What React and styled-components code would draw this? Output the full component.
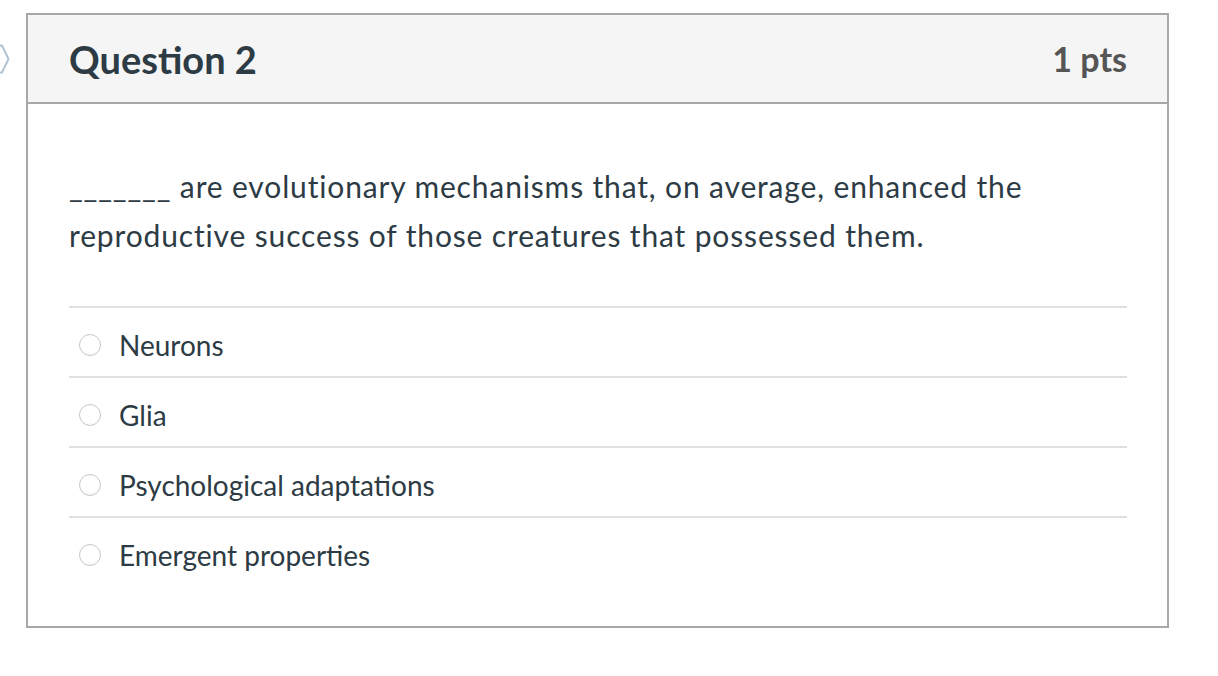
import React from 'react';
import styled, { createGlobalStyle } from 'styled-components';

const GlobalStyle = createGlobalStyle`
  html, body {
    margin: 0;
    padding: 0;
    background: #fff;
    font-family: Lato, "Open Sans", sans-serif;
    color: #2d3b45;
  }
`;

const Page = styled.div`
  display: flex;
  align-items: flex-start;
  padding-top: 13px;
  width: 1218px;
  height: 676px;
  box-sizing: border-box;
`;

const FlagColumn = styled.div`
  width: 26px;
  flex-shrink: 0;
  padding-top: 31px;
`;

const Card = styled.div`
  width: 1143px;
  border: 2px solid #a8a8a8;
  box-sizing: border-box;
  background: #fff;
`;

const Header = styled.div`
  display: flex;
  justify-content: space-between;
  align-items: center;
  height: 89px;
  padding: 0 40px 0 41px;
  background: #f5f5f5;
  border-bottom: 2px solid #a8a8a8;
  box-sizing: border-box;
`;

const Title = styled.h2`
  margin: 0;
  font-size: 38px;
  font-weight: 700;
  color: #2d3b45;
`;

const Points = styled.div`
  font-size: 34px;
  font-weight: 700;
  color: #555;
`;

const Body = styled.div`
  padding: 58px 40px 40px 41px;
`;

const QuestionText = styled.p`
  margin: 0 0 46px;
  font-size: 30px;
  line-height: 49px;
  letter-spacing: 0.85px;
  color: #2d3b45;
`;

const Answers = styled.div`
  display: flex;
  flex-direction: column;
`;

const Answer = styled.label`
  display: flex;
  align-items: center;
  height: 70px;
  border-top: 2px solid #e0e0e0;
  box-sizing: border-box;
  padding: 6px 0 0 10px;
  font-size: 28px;
  color: #2d3b45;
`;

const Radio = styled.span`
  width: 22px;
  height: 22px;
  border-radius: 50%;
  border: 1px solid #c8c8c8;
  background: radial-gradient(circle at 50% 40%, #fff 55%, #f1f1f1 100%);
  box-sizing: border-box;
  margin-right: 18px;
  flex-shrink: 0;
`;

const FlagIcon = () => (
  <svg width="10" height="30" viewBox="0 0 10 30">
    <path d="M0 1.5 H2 L8.5 15 L2 28.5 H0" fill="none" stroke="#b2c3d3" strokeWidth="2" strokeLinejoin="round" />
  </svg>
);

const answers = ['Neurons', 'Glia', 'Psychological adaptations', 'Emergent properties'];

export default function App() {
  return (
    <>
      <GlobalStyle />
      <Page>
        <FlagColumn>
          <FlagIcon />
        </FlagColumn>
        <Card>
          <Header>
            <Title>Question 2</Title>
            <Points>1 pts</Points>
          </Header>
          <Body>
            <QuestionText>
              _______ are evolutionary mechanisms that, on average, enhanced the reproductive success of those
              creatures that possessed them.
            </QuestionText>
            <Answers>
              {answers.map(a => (
                <Answer key={a}>
                  <Radio />
                  {a}
                </Answer>
              ))}
            </Answers>
          </Body>
        </Card>
      </Page>
    </>
  );
}
